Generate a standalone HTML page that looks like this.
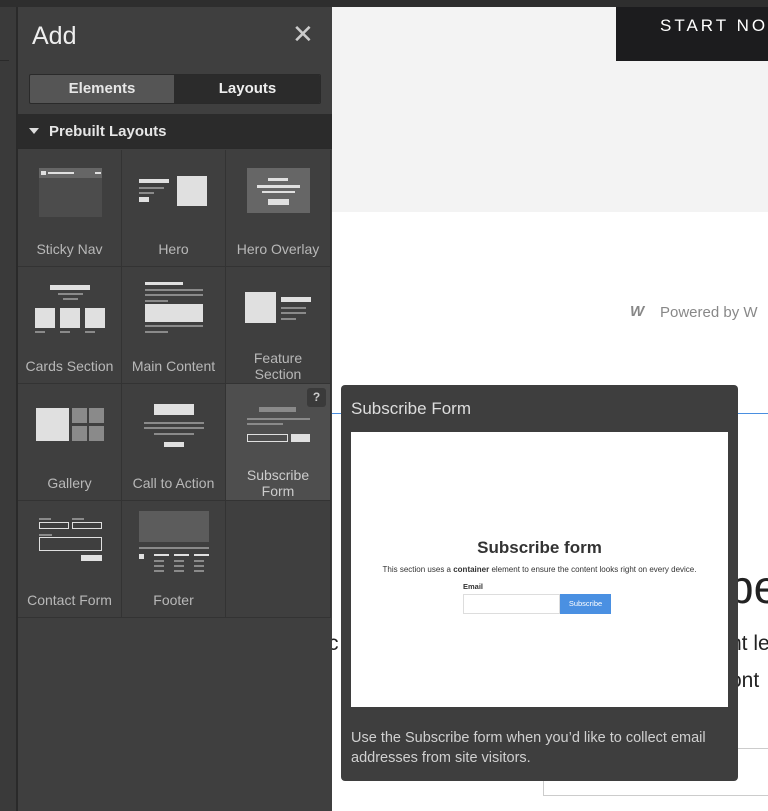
<!DOCTYPE html>
<html><head><meta charset="utf-8"><style>
*{margin:0;padding:0;box-sizing:border-box}
body{width:768px;height:811px;overflow:hidden;position:relative;background:#fff;font-family:"Liberation Sans",sans-serif}
.a{position:absolute}
.w{background:#e0e0e0}
.g{background:#8a8a8a}
.o{border:1px solid #e0e0e0}
.cell{position:absolute;width:104px;height:117px;border-right:1px solid #333;border-bottom:1px solid #333}
.lab{position:absolute;left:0;width:100%;text-align:center;color:#b8b8b8;font-size:14px;line-height:16px}
</style></head><body>
<div class="a" style="left:0;top:0;width:768px;height:7px;background:#2e2e2e"></div>
<div class="a" style="left:0;top:7px;width:18px;height:804px;background:#3a3a3a;border-right:2px solid #2a2a2a"></div>
<div class="a" style="left:0;top:60px;width:9px;height:1px;background:#2a2a2a"></div>
<div class="a" style="left:332px;top:7px;width:436px;height:205px;background:#f3f3f3"></div>
<div class="a" style="left:616px;top:7px;width:152px;height:54px;background:#1c1c1e;color:#fff;font-size:17px;letter-spacing:3px;padding:9px 0 0 44px;white-space:nowrap;overflow:hidden">START NO</div>
<div class="a" style="left:630px;top:303px;color:#888;font-size:15px;font-weight:bold;font-style:italic">W</div>
<div class="a" style="left:660px;top:304px;color:#888;font-size:15px;white-space:nowrap">Powered by W</div>
<div class="a" style="left:332px;top:413px;width:436px;height:1px;background:#4a8fe0"></div>
<div class="a" style="left:728px;top:560px;color:#222;font-size:46px;white-space:nowrap">pe</div>
<div class="a" style="left:730px;top:632px;color:#222;font-size:21px;white-space:nowrap">nt le</div>
<div class="a" style="left:730px;top:669px;color:#222;font-size:21px;white-space:nowrap">ont</div>
<div class="a" style="left:328px;top:632px;color:#222;font-size:21px">c</div>
<div class="a" style="left:543px;top:748px;width:240px;height:48px;border:1px solid #ccc"></div>
<div class="a" style="left:18px;top:7px;width:314px;height:804px;background:#3f3f3f">
 <div class="a" style="left:14px;top:15px;color:#eee;font-size:25px">Add</div>
 <div class="a" style="left:274px;top:14px;color:#ccc;font-size:26px;line-height:26px">✕</div>
 <div class="a" style="left:11px;top:67px;width:292px;height:30px;border:1px solid #2a2a2a;border-radius:2px;background:#555;overflow:hidden">
  <div class="a" style="left:0;top:0;width:144px;height:28px;color:#e6e6e6;font-size:15px;font-weight:bold;text-align:center;line-height:28px">Elements</div>
  <div class="a" style="left:144px;top:0;width:147px;height:28px;background:#2b2b2b;color:#eee;font-size:15px;font-weight:bold;text-align:center;line-height:28px">Layouts</div>
 </div>
 <div class="a" style="left:0;top:107px;width:314px;height:35px;background:#2b2b2b;border-bottom:1px solid #2a2a2a">
  <div class="a" style="left:11px;top:14px;width:0;height:0;border-left:5px solid transparent;border-right:5px solid transparent;border-top:6px solid #ddd"></div>
  <div class="a" style="left:31px;top:9px;color:#e6e6e6;font-size:15px;font-weight:bold">Prebuilt Layouts</div>
 </div>
</div>
<div class="cell" style="left:18px;top:150px"><div class="lab" style="top:91px">Sticky Nav</div></div>
<div class="cell" style="left:122px;top:150px"><div class="lab" style="top:91px">Hero</div></div>
<div class="cell" style="left:226px;top:150px;width:105px"><div class="lab" style="top:91px">Hero Overlay</div></div>
<div class="cell" style="left:18px;top:267px"><div class="lab" style="top:91px">Cards Section</div></div>
<div class="cell" style="left:122px;top:267px"><div class="lab" style="top:91px">Main Content</div></div>
<div class="cell" style="left:226px;top:267px;width:105px"><div class="lab" style="top:83px">Feature<br>Section</div></div>
<div class="cell" style="left:18px;top:384px"><div class="lab" style="top:91px">Gallery</div></div>
<div class="cell" style="left:122px;top:384px"><div class="lab" style="top:91px">Call to Action</div></div>
<div class="cell" style="left:226px;top:384px;width:105px;background:#4e4e4e"><div class="lab" style="top:83px;color:#ccc">Subscribe<br>Form</div>
 <div class="a" style="left:81px;top:4px;width:19px;height:19px;background:#3a3a3a;border-radius:3px;color:#ccc;font-size:12px;font-weight:bold;text-align:center;line-height:19px">?</div></div>
<div class="cell" style="left:18px;top:501px"><div class="lab" style="top:91px">Contact Form</div></div>
<div class="cell" style="left:122px;top:501px"><div class="lab" style="top:91px">Footer</div></div>
<div class="cell" style="left:226px;top:501px;width:105px"></div>
<div class="a" style="left:39px;top:168px;width:63px;height:49px;background:#4c4c4c"></div>
<div class="a" style="left:39px;top:168px;width:63px;height:10px;background:#666"></div>
<div class="a w" style="left:41px;top:171px;width:5px;height:4px"></div>
<div class="a w" style="left:48px;top:172px;width:26px;height:2px"></div>
<div class="a w" style="left:95px;top:172px;width:6px;height:2px"></div>
<div class="a w" style="left:139px;top:179px;width:30px;height:4px"></div>
<div class="a g" style="left:139px;top:187px;width:25px;height:2px"></div>
<div class="a g" style="left:139px;top:192px;width:15px;height:2px"></div>
<div class="a w" style="left:139px;top:197px;width:10px;height:5px"></div>
<div class="a w" style="left:177px;top:176px;width:30px;height:30px"></div>
<div class="a" style="left:247px;top:168px;width:63px;height:45px;background:#666"></div>
<div class="a w" style="left:268px;top:178px;width:20px;height:3px"></div>
<div class="a w" style="left:257px;top:185px;width:43px;height:3px"></div>
<div class="a w" style="left:262px;top:191px;width:33px;height:2px"></div>
<div class="a w" style="left:268px;top:199px;width:21px;height:6px"></div>
<div class="a w" style="left:50px;top:285px;width:40px;height:5px"></div>
<div class="a g" style="left:58px;top:293px;width:25px;height:2px"></div>
<div class="a g" style="left:63px;top:298px;width:15px;height:2px"></div>
<div class="a w" style="left:35px;top:308px;width:20px;height:20px"></div>
<div class="a w" style="left:60px;top:308px;width:20px;height:20px"></div>
<div class="a w" style="left:85px;top:308px;width:20px;height:20px"></div>
<div class="a g" style="left:35px;top:331px;width:10px;height:2px"></div>
<div class="a g" style="left:60px;top:331px;width:10px;height:2px"></div>
<div class="a g" style="left:85px;top:331px;width:10px;height:2px"></div>
<div class="a w" style="left:145px;top:282px;width:38px;height:3px"></div>
<div class="a g" style="left:145px;top:289px;width:58px;height:2px"></div>
<div class="a g" style="left:145px;top:294px;width:58px;height:2px"></div>
<div class="a g" style="left:145px;top:300px;width:23px;height:2px"></div>
<div class="a w" style="left:145px;top:304px;width:58px;height:18px"></div>
<div class="a g" style="left:145px;top:325px;width:58px;height:2px"></div>
<div class="a g" style="left:145px;top:331px;width:23px;height:2px"></div>
<div class="a w" style="left:245px;top:292px;width:31px;height:31px"></div>
<div class="a w" style="left:281px;top:297px;width:30px;height:5px"></div>
<div class="a g" style="left:281px;top:307px;width:25px;height:2px"></div>
<div class="a g" style="left:281px;top:312px;width:25px;height:2px"></div>
<div class="a g" style="left:281px;top:318px;width:15px;height:2px"></div>
<div class="a w" style="left:36px;top:408px;width:33px;height:33px"></div>
<div class="a g" style="left:72px;top:408px;width:15px;height:15px"></div>
<div class="a g" style="left:89px;top:408px;width:15px;height:15px"></div>
<div class="a g" style="left:72px;top:426px;width:15px;height:15px"></div>
<div class="a g" style="left:89px;top:426px;width:15px;height:15px"></div>
<div class="a w" style="left:154px;top:404px;width:40px;height:11px"></div>
<div class="a g" style="left:144px;top:422px;width:60px;height:2px"></div>
<div class="a g" style="left:144px;top:427px;width:60px;height:2px"></div>
<div class="a g" style="left:154px;top:433px;width:40px;height:2px"></div>
<div class="a w" style="left:164px;top:442px;width:20px;height:5px"></div>
<div class="a g" style="left:259px;top:407px;width:37px;height:5px"></div>
<div class="a g" style="left:247px;top:418px;width:63px;height:2px"></div>
<div class="a g" style="left:247px;top:423px;width:36px;height:2px"></div>
<div class="a o" style="left:247px;top:434px;width:41px;height:8px"></div>
<div class="a w" style="left:291px;top:434px;width:19px;height:8px"></div>
<div class="a g" style="left:39px;top:518px;width:12px;height:2px"></div>
<div class="a g" style="left:72px;top:518px;width:12px;height:2px"></div>
<div class="a o" style="left:39px;top:522px;width:30px;height:7px"></div>
<div class="a o" style="left:72px;top:522px;width:30px;height:7px"></div>
<div class="a g" style="left:39px;top:534px;width:13px;height:2px"></div>
<div class="a o" style="left:39px;top:537px;width:63px;height:14px"></div>
<div class="a w" style="left:81px;top:555px;width:21px;height:6px"></div>
<div class="a" style="left:139px;top:511px;width:70px;height:31px;background:#5c5c5c"></div>
<div class="a g" style="left:139px;top:547px;width:70px;height:2px"></div>
<div class="a w" style="left:139px;top:554px;width:5px;height:5px"></div>
<div class="a w" style="left:154px;top:554px;width:15px;height:2px"></div>
<div class="a w" style="left:174px;top:554px;width:15px;height:2px"></div>
<div class="a w" style="left:194px;top:554px;width:15px;height:2px"></div>
<div class="a g" style="left:154px;top:560px;width:10px;height:2px"></div><div class="a g" style="left:154px;top:565px;width:10px;height:2px"></div><div class="a g" style="left:154px;top:570px;width:10px;height:2px"></div>
<div class="a g" style="left:174px;top:560px;width:10px;height:2px"></div><div class="a g" style="left:174px;top:565px;width:10px;height:2px"></div><div class="a g" style="left:174px;top:570px;width:10px;height:2px"></div>
<div class="a g" style="left:194px;top:560px;width:10px;height:2px"></div><div class="a g" style="left:194px;top:565px;width:10px;height:2px"></div><div class="a g" style="left:194px;top:570px;width:10px;height:2px"></div>
<div class="a" style="left:341px;top:385px;width:397px;height:396px;background:#3e3e3e;border-radius:4px">
 <div class="a" style="left:10px;top:14px;color:#ddd;font-size:17px">Subscribe Form</div>
 <div class="a" style="left:10px;top:47px;width:377px;height:275px;background:#fff">
  <div class="a" style="left:0;top:106px;width:100%;text-align:center;color:#333;font-size:17px;font-weight:bold">Subscribe form</div>
  <div class="a" style="left:0;top:133px;width:100%;text-align:center;color:#333;font-size:8px">This section uses a <b>container</b> element to ensure the content looks right on every device.</div>
  <div class="a" style="left:112px;top:150px;color:#333;font-size:7.5px;font-weight:bold">Email</div>
  <div class="a" style="left:112px;top:162px;width:97px;height:20px;border:1px solid #ddd"></div>
  <div class="a" style="left:209px;top:162px;width:51px;height:20px;background:#4a90e2;color:#fff;font-size:7.5px;text-align:center;line-height:20px">Subscribe</div>
 </div>
 <div class="a" style="left:10px;top:343px;width:385px;color:#d0d0d0;font-size:14.5px;line-height:20px">Use the Subscribe form when you’d like to collect email addresses from site visitors.</div>
</div>
</body></html>
